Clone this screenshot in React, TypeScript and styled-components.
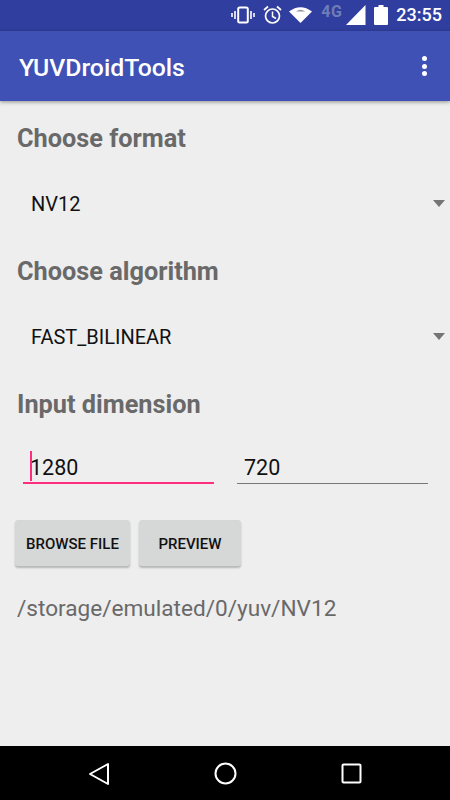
import React from 'react';
import styled, { createGlobalStyle } from 'styled-components';

const GlobalStyle = createGlobalStyle`
  html, body { margin: 0; padding: 0; }
  body { background: #eeeeee; font-family: Roboto, "Liberation Sans", sans-serif; }
  * { box-sizing: border-box; }
`;

const Screen = styled.div`
  width: 450px;
  height: 800px;
  display: flex;
  flex-direction: column;
  overflow: hidden;
  background: #eeeeee;
`;

const StatusBar = styled.div`
  height: 31px;
  flex: none;
  background: #303f9f;
  display: flex;
  align-items: center;
  justify-content: flex-end;
  padding: 0 8px 2px 0;
  color: #fff;
`;

const StatusIcon = styled.svg<{ $gap?: number }>`
  display: block;
  flex: none;
  margin-right: ${p => p.$gap ?? 0}px;
`;

const NetworkLabel = styled.span`
  font-size: 16px;
  font-weight: 700;
  color: #6f7cb8;
  margin: -7px 4px 0 0;
  letter-spacing: 0.5px;
`;

const Clock = styled.span`
  font-size: 18px;
  font-weight: 500;
  margin-left: 8px;
`;

const AppBar = styled.header`
  height: 70px;
  flex: none;
  background: #3f51b5;
  display: flex;
  align-items: center;
  justify-content: space-between;
  padding: 0 23px 0 19px;
  box-shadow: 0 1px 4px rgba(0, 0, 0, 0.4);
  position: relative;
`;

const AppTitle = styled.h1`
  margin: 2px 0 0;
  color: #fff;
  font-size: 24.8px;
  font-weight: 500;
`;

const MenuDots = styled.div`
  display: flex;
  flex-direction: column;
  gap: 2.5px;
`;

const MenuDot = styled.span`
  width: 5px;
  height: 5px;
  border-radius: 50%;
  background: #fff;
`;

const Content = styled.main`
  flex: 1;
  display: flex;
  flex-direction: column;
  padding: 24px 5px 0 17px;
`;

const SectionTitle = styled.h2`
  margin: 0;
  height: 28px;
  line-height: 28px;
  color: #696969;
  font-size: 25.3px;
  font-weight: 700;
`;

const Spinner = styled.div`
  height: 50px;
  margin: 26px 0 29px;
  display: flex;
  align-items: center;
  justify-content: space-between;
  padding-left: 14px;
  color: #111;
  font-size: 20px;
`;

const Caret = styled.span`
  width: 0;
  height: 0;
  border-left: 6px solid transparent;
  border-right: 6px solid transparent;
  border-top: 7px solid #757575;
  margin-top: -2px;
`;

const InputRow = styled.div`
  display: flex;
  gap: 23px;
  margin: 21px 17px 0 6px;
`;

const Field = styled.div<{ $active?: boolean }>`
  position: relative;
  flex: 1;
  height: 44px;
  padding: 15px 0 0 7px;
  color: #111;
  font-size: 21.5px;
  line-height: 26px;
  border-bottom: ${p => (p.$active ? '2px solid #ff2d7e' : '1.5px solid #777')};
`;

const TextCursor = styled.span`
  position: absolute;
  left: 7px;
  top: 11px;
  width: 2px;
  height: 30px;
  background: #ff2d7e;
`;

const ButtonRow = styled.div`
  display: flex;
  gap: 9px;
  margin: 36px 0 0 -2px;
`;

const ActionButton = styled.button<{ $width: number }>`
  width: ${p => p.$width}px;
  height: 46px;
  border: none;
  border-radius: 3px;
  background: #d6d7d7;
  box-shadow: 0 2px 2px rgba(0, 0, 0, 0.24);
  color: #111;
  font-family: inherit;
  font-size: 15px;
  font-weight: 500;
  padding: 2px 0 0;
`;

const PathText = styled.p`
  margin: 29px 0 0 0;
  color: #696969;
  font-size: 22.6px;
  line-height: 28px;
`;

const NavBar = styled.nav`
  height: 54px;
  flex: none;
  background: #000;
  display: flex;
  align-items: center;
  justify-content: center;
  gap: 104px;
  padding-top: 1px;
`;

export default function App() {
  return (
    <Screen>
      <GlobalStyle />
      <StatusBar>
        <StatusIcon $gap={8} width="24" height="18" viewBox="0 0 24 18" fill="none" stroke="#fff">
          <rect x="7.2" y="1.5" width="9.6" height="15" rx="1.5" strokeWidth="2" />
          <path d="M4 5v8M1 7v4M20 5v8M23 7v4" strokeWidth="1.6" />
        </StatusIcon>
        <StatusIcon $gap={7} width="19" height="20" viewBox="0 0 19 20" fill="none" stroke="#fff">
          <circle cx="9.5" cy="11" r="7" strokeWidth="1.7" />
          <path d="M9.5 6.5V11.5L13 13.5" strokeWidth="1.5" />
          <path d="M1 5L5 1.5M18 5L14 1.5" strokeWidth="1.7" />
        </StatusIcon>
        <StatusIcon $gap={9} width="23" height="17" viewBox="0 0 23 17">
          <path d="M0 5.5Q11.5-3 23 5.5L11.5 17Z" fill="#fff" />
          <path d="M7 5.5Q11.5 2 16 5.5Z" fill="#8f8f9f" />
        </StatusIcon>
        <NetworkLabel>4G</NetworkLabel>
        <StatusIcon $gap={8} width="20" height="20" viewBox="0 0 20 20">
          <path d="M0 20L19.5 0V20Z" fill="#fff" />
        </StatusIcon>
        <StatusIcon width="14" height="20" viewBox="0 0 14 20">
          <path d="M4.5 0h5v2H13a1 1 0 0 1 1 1v16a1 1 0 0 1-1 1H1a1 1 0 0 1-1-1V3a1 1 0 0 1 1-1h3.500Z" fill="#fff" />
        </StatusIcon>
        <Clock>23:55</Clock>
      </StatusBar>
      <AppBar>
        <AppTitle>YUVDroidTools</AppTitle>
        <MenuDots>
          <MenuDot />
          <MenuDot />
          <MenuDot />
        </MenuDots>
      </AppBar>
      <Content>
        <SectionTitle>Choose format</SectionTitle>
        <Spinner>
          NV12
          <Caret />
        </Spinner>
        <SectionTitle>Choose algorithm</SectionTitle>
        <Spinner>
          FAST_BILINEAR
          <Caret />
        </Spinner>
        <SectionTitle>Input dimension</SectionTitle>
        <InputRow>
          <Field $active>
            <TextCursor />
            1280
          </Field>
          <Field>720</Field>
        </InputRow>
        <ButtonRow>
          <ActionButton $width={115}>BROWSE FILE</ActionButton>
          <ActionButton $width={102}>PREVIEW</ActionButton>
        </ButtonRow>
        <PathText>/storage/emulated/0/yuv/NV12</PathText>
      </Content>
      <NavBar>
        <svg width="22" height="24" viewBox="0 0 22 24" fill="none" stroke="#fff" strokeWidth="2" strokeLinejoin="round">
          <path d="M20 2V22L2 12Z" />
        </svg>
        <svg width="23" height="23" viewBox="0 0 23 23" fill="none" stroke="#fff" strokeWidth="2">
          <circle cx="11.500" cy="11.500" r="10" />
        </svg>
        <svg width="21" height="21" viewBox="0 0 21 21" fill="none" stroke="#fff" strokeWidth="2" strokeLinejoin="round">
          <rect x="1.500" y="1.500" width="18" height="18" rx="1" />
        </svg>
      </NavBar>
    </Screen>
  );
}
